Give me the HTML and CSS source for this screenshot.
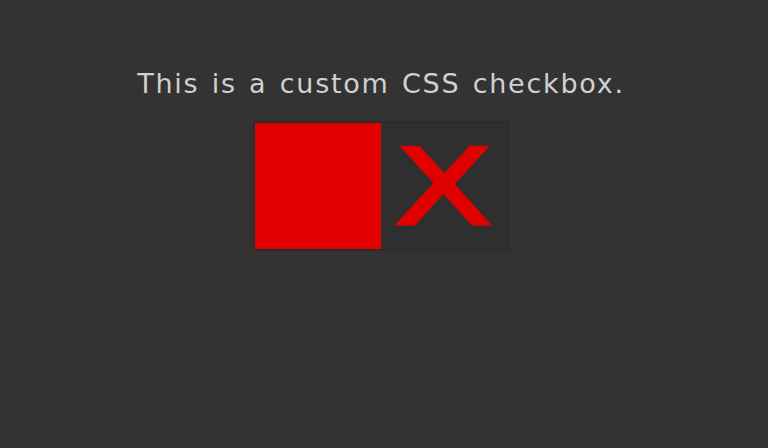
FILE: index.html
```html
<!DOCTYPE html>
<html>
<head>
<meta charset="utf-8">
<link rel="stylesheet" href="styles.css">
</head>
<body>
<main class="page">
  <p class="caption">This is a custom CSS checkbox.</p>
  <label class="checkbox">
    <span class="knob"></span>
    <span class="mark"><span class="mark-x">X</span></span>
  </label>
</main>
</body>
</html>
```

FILE: styles.css
```css
html, body {
  margin: 0;
  padding: 0;
  background: #333333;
  height: 100%;
}
.page {
  display: flex;
  flex-direction: column;
  align-items: center;
  padding-top: 66px;
  padding-right: 6px;
}
.caption {
  margin: 0;
  font-family: "DejaVu Sans", sans-serif;
  font-size: 27px;
  line-height: 36px;
  color: #d0d0d0;
  letter-spacing: 1.75px;
  word-spacing: 2px;
}
.checkbox {
  margin-top: 20px;
  display: flex;
  width: 253px;
  height: 126px;
  border: 1px solid #2a2a2a;
  background: #2f2f2f;
  box-shadow: 0 0 2px rgba(0,0,0,0.3);
}
.knob {
  width: 126px;
  height: 126px;
  background: #e00000;
}
.mark {
  flex: 1;
  display: flex;
  align-items: center;
  justify-content: center;
  padding-top: 4px;
  padding-right: 2px;
}
.mark-x {
  font-family: "DejaVu Sans", sans-serif;
  font-size: 106px;
  line-height: 1;
  color: #e00000;
  -webkit-text-stroke: 3px #e00000;
  transform: scaleX(1.36);
}
```
